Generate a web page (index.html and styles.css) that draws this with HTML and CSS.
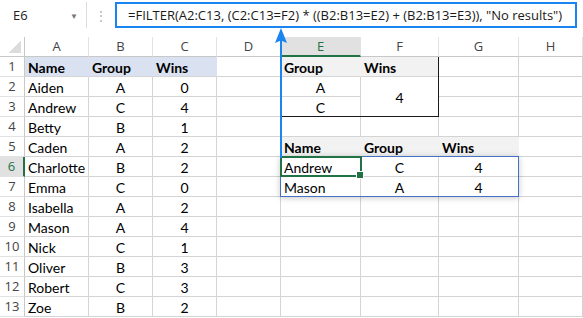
FILE: index.html
```html
<!DOCTYPE html>
<html>
<head>
<meta charset="utf-8">
<link rel="stylesheet" href="styles.css">
</head>
<body>
<div class="app">
  <div class="fbar">
    <div class="namebox"><span class="ref">E6</span><span class="dd">&#9660;</span></div>
    <div class="dots">&#8942;</div>
    <div class="formula">=FILTER(A2:C13, (C2:C13=F2) * ((B2:B13=E2) + (B2:B13=E3)), "No results")</div>
  </div>
  <div class="sheetwrap">
    <div class="sheet">
      <div class="corner"></div><div class="ch">A</div><div class="ch">B</div><div class="ch">C</div><div class="ch">D</div><div class="ch act">E</div><div class="ch">F</div><div class="ch">G</div><div class="ch">H</div>

      <div class="rh">1</div><div class="c hb">Name</div><div class="c hb">Group</div><div class="c hb">Wins</div><div class="c"></div><div class="c hg">Group</div><div class="c hg">Wins</div><div class="c"></div><div class="c"></div>
      <div class="rh">2</div><div class="c">Aiden</div><div class="c m">A</div><div class="c m">0</div><div class="c"></div><div class="c m">A</div><div class="c m merged">4</div><div class="c"></div><div class="c"></div>
      <div class="rh">3</div><div class="c">Andrew</div><div class="c m">C</div><div class="c m">4</div><div class="c"></div><div class="c m">C</div><div class="c"></div><div class="c"></div>
      <div class="rh">4</div><div class="c">Betty</div><div class="c m">B</div><div class="c m">1</div><div class="c"></div><div class="c"></div><div class="c"></div><div class="c"></div><div class="c"></div>
      <div class="rh">5</div><div class="c">Caden</div><div class="c m">A</div><div class="c m">2</div><div class="c"></div><div class="c hg">Name</div><div class="c hg">Group</div><div class="c hg">Wins</div><div class="c"></div>
      <div class="rh act">6</div><div class="c">Charlotte</div><div class="c m">B</div><div class="c m">2</div><div class="c"></div><div class="c">Andrew</div><div class="c m">C</div><div class="c m">4</div><div class="c"></div>
      <div class="rh">7</div><div class="c">Emma</div><div class="c m">C</div><div class="c m">0</div><div class="c"></div><div class="c">Mason</div><div class="c m">A</div><div class="c m">4</div><div class="c"></div>
      <div class="rh">8</div><div class="c">Isabella</div><div class="c m">A</div><div class="c m">2</div><div class="c"></div><div class="c"></div><div class="c"></div><div class="c"></div><div class="c"></div>
      <div class="rh">9</div><div class="c">Mason</div><div class="c m">A</div><div class="c m">4</div><div class="c"></div><div class="c"></div><div class="c"></div><div class="c"></div><div class="c"></div>
      <div class="rh">10</div><div class="c">Nick</div><div class="c m">C</div><div class="c m">1</div><div class="c"></div><div class="c"></div><div class="c"></div><div class="c"></div><div class="c"></div>
      <div class="rh">11</div><div class="c">Oliver</div><div class="c m">B</div><div class="c m">3</div><div class="c"></div><div class="c"></div><div class="c"></div><div class="c"></div><div class="c"></div>
      <div class="rh">12</div><div class="c">Robert</div><div class="c m">C</div><div class="c m">3</div><div class="c"></div><div class="c"></div><div class="c"></div><div class="c"></div><div class="c"></div>
      <div class="rh">13</div><div class="c">Zoe</div><div class="c m">B</div><div class="c m">2</div><div class="c"></div><div class="c"></div><div class="c"></div><div class="c"></div><div class="c"></div>
    </div>
    <div class="overlays">
      <div class="box-ef"></div>
      <div class="spill"></div>
      <div class="sel"></div>
    </div>
  </div>
  <svg class="arrow" width="16" height="135" viewBox="0 0 16 135">
    <line x1="8" y1="10" x2="8" y2="130" stroke="#1a84f0" stroke-width="2"/>
    <polygon points="8,0 14,15 8,12.5 2,15" fill="#1a84f0"/>
  </svg>
</div>
</body>
</html>
```

FILE: styles.css
```css
* { box-sizing: border-box; }
html, body { margin: 0; padding: 0; background: #fff; }
.app {
  position: relative;
  width: 583px;
  height: 318px;
  overflow: hidden;
  font-family: "Lato", "Liberation Sans", sans-serif;
}
.fbar {
  display: flex;
  align-items: flex-start;
  height: 37px;
  padding-top: 2px;
}
.namebox {
  width: 87px;
  height: 26px;
  display: flex;
  align-items: center;
  justify-content: space-between;
  padding: 0 8px 0 13px;
  border-right: 1px solid #dcdcdc;
  font-family: "Open Sans", sans-serif;
  font-size: 13px;
  color: #222;
}
.namebox .dd { font-size: 8px; color: #777; }
.dots {
  width: 28px;
  height: 26px;
  display: flex;
  align-items: center;
  justify-content: center;
  color: #b8b8b8;
  font-size: 14px;
}
.formula {
  width: 462px;
  height: 26px;
  border: 2px solid #1a84f0;
  padding-left: 11px;
  line-height: 22px;
  font-family: "Open Sans", sans-serif;
  font-size: 13px;
  color: #1a1a1a;
  white-space: nowrap;
}
.sheetwrap { display: grid; }
.sheet, .overlays {
  grid-area: 1 / 1;
  display: grid;
  grid-template-columns: 25px 64px 64px 64px 64px 80px 78px 80px 64px;
  grid-template-rows: repeat(14, 20px);
}
.corner {
  border-right: 1px solid #c8c8c8;
  border-bottom: 1px solid #c8c8c8;
  background: linear-gradient(135deg, transparent 50%, #dcdcdc 50%) right 3px bottom 3px / 12px 12px no-repeat;
}
.ch {
  border-right: 1px solid #e2e2e2;
  border-bottom: 1px solid #c8c8c8;
  text-align: center;
  font-family: "Open Sans", sans-serif;
  font-size: 13px;
  line-height: 19px;
  color: #444;
}
.ch.act {
  background: #e1e1e1;
  color: #217346;
  border-bottom: 2px solid #217346;
}
.rh {
  border-right: 1px solid #c8c8c8;
  border-bottom: 1px solid #e2e2e2;
  text-align: center;
  font-family: "Open Sans", sans-serif;
  font-size: 13px;
  line-height: 19px;
  color: #444;
}
.rh.act {
  background: #e1e1e1;
  color: #217346;
  border-right: 2px solid #217346;
}
.c {
  border-right: 1px solid #d4d4d4;
  border-bottom: 1px solid #d4d4d4;
  padding: 1px 3px 0;
  font-size: 14px;
  line-height: 19px;
  color: #000;
  white-space: nowrap;
}
.c.m { text-align: center; }
.c.hb {
  background: #dae2f2;
  border-right-color: #dae2f2;
  font-weight: bold;
}
.c.hg {
  background: #f2f2f2;
  border-right-color: #f2f2f2;
  font-weight: bold;
}
.c.merged {
  grid-row: span 2;
  display: flex;
  align-items: center;
  justify-content: center;
}
.overlays { pointer-events: none; }
.box-ef {
  grid-row: 2 / 5;
  grid-column: 6 / 8;
  border-right: 1px solid #1a1a1a;
  border-bottom: 1px solid #1a1a1a;
}
.spill {
  grid-row: 7 / 9;
  grid-column: 6 / 9;
  margin: -1px 0 0 -1px;
  border: 1px solid #4472c4;
  box-shadow: 0 1px 6px rgba(0, 0, 0, 0.22);
}
.sel {
  grid-row: 7;
  grid-column: 6;
  margin: -1px -1px 0 -1px;
  border: 2px solid #217346;
  position: relative;
}
.sel::after {
  content: "";
  position: absolute;
  right: -4px;
  bottom: -4px;
  width: 6px;
  height: 6px;
  background: #217346;
  border: 1px solid #fff;
}
.arrow {
  position: absolute;
  left: 273px;
  top: 28px;
}
```
